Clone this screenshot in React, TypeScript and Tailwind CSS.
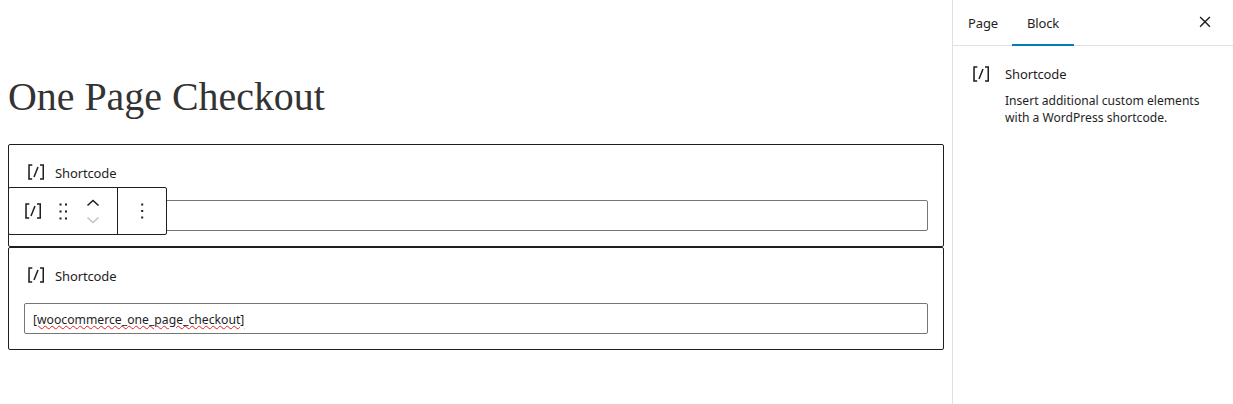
const uiFont = "font-['Noto_Sans','Open_Sans',sans-serif]";

function ShortcodeIcon({ className = "" }: { className?: string }) {
  return (
    <svg width="24" height="24" viewBox="0 0 24 24" className={className} fill="currentColor">
      <path d="M16 4.2v1.5h2.5v12.5H16v1.5h4V4.2h-4zM4.2 19.8h4v-1.5H5.8V5.8h2.5V4.2h-4l-.1 15.6zm5.1-3.1l1.4.6 4-10-1.4-.6-4 10z" />
    </svg>
  );
}

function BlockCard({ value, className = "" }: { value?: string; className?: string }) {
  return (
    <div className={`border border-[#1e1e1e] rounded-[2px] px-[15px] pt-[15px] pb-[15px] ${className}`}>
      <div className="flex items-center h-[24px] mb-[16px] text-[#1e1e1e]">
        <ShortcodeIcon />
        <span className="ml-[7px] pt-[2px] text-[13px] tracking-[-0.01em] leading-[24px] text-[#1e1e1e]">Shortcode</span>
      </div>
      <div className="h-[31px] border border-[#757575] rounded-[2px] px-[8px] pt-[3px] flex items-center text-[12.2px] text-[#1e1e1e]">
        {value && (
          <span className="underline decoration-wavy decoration-[#e02020] decoration-1 underline-offset-[1px]">{value}</span>
        )}
      </div>
    </div>
  );
}

function BlockToolbar() {
  return (
    <div className="absolute left-[8px] top-[187px] w-[159px] h-[48px] bg-white border border-[#1e1e1e] rounded-[2px] flex text-[#1e1e1e]">
      <div className="w-[109px] flex items-center border-r border-[#1e1e1e]">
        <ShortcodeIcon className="ml-[12px] shrink-0" />
        <svg width="18" height="18" viewBox="0 0 18 18" className="ml-[9px] shrink-0" fill="currentColor">
          <rect x="5.5" y="1.5" width="2" height="2" />
          <rect x="11" y="1.5" width="2" height="2" />
          <rect x="5.5" y="8.5" width="2" height="2" />
          <rect x="11" y="8.5" width="2" height="2" />
          <rect x="5.5" y="15.5" width="2" height="2" />
          <rect x="11" y="15.5" width="2" height="2" />
        </svg>
        <div className="ml-[13px] flex flex-col items-center">
          <svg width="16" height="12" viewBox="0 0 16 12" fill="none" stroke="#1e1e1e" strokeWidth="1.6">
            <path d="M2.5 8.5 8 3.5l5.5 5" />
          </svg>
          <svg width="16" height="12" viewBox="0 0 16 12" fill="none" stroke="#c4c4c4" strokeWidth="1.6" className="mt-[5px]">
            <path d="M2.5 3.5 8 8.5l5.5-5" />
          </svg>
        </div>
      </div>
      <div className="flex-1 flex items-center justify-center">
        <svg width="24" height="24" viewBox="0 0 24 24" fill="currentColor">
          <rect x="11.2" y="4.5" width="2" height="2" />
          <rect x="11.2" y="11" width="2" height="2" />
          <rect x="11.2" y="17.5" width="2" height="2" />
        </svg>
      </div>
    </div>
  );
}

export default function App() {
  return (
    <div className={`relative flex w-[1233px] h-[404px] overflow-hidden bg-white ${uiFont}`}>
      <main className="w-[952px] shrink-0 px-[8px]">
        <h1 className="font-['Liberation_Serif','Times_New_Roman',serif] text-[39.9px] leading-[50px] font-normal text-[#333333] mt-[72px] mb-[22px]">
          One Page Checkout
        </h1>
        <BlockCard />
        <BlockCard value="[woocommerce_one_page_checkout]" />
      </main>
      <BlockToolbar />
      <aside className="w-[281px] border-l border-[#e0e0e0]">
        <div className="h-[46px] border-b border-[#e0e0e0] flex items-center text-[13px] tracking-[-0.01em] text-[#1e1e1e]">
          <div className="w-[59px] h-full flex items-center pl-[15px] pt-[2px]">Page</div>
          <div className="w-[62px] h-[46px] flex items-center justify-center border-b-[2px] border-[#007cba] pt-[4px]">
            Block
          </div>
          <svg width="24" height="24" viewBox="0 0 24 24" fill="currentColor" className="ml-auto mr-[16px] -mt-[2px]">
            <path d="M13 11.8l4.4-4.4-1-1-4.4 4.4-4.4-4.4-1 1 4.4 4.4-4.4 4.4 1 1 4.4-4.4 4.4 4.4 1-1-4.4-4.4z" />
          </svg>
        </div>
        <div className="flex pl-[16px] pt-[16px]">
          <ShortcodeIcon className="shrink-0 text-[#1e1e1e]" />
          <div className="ml-[12px] w-[210px]">
            <div className="text-[13px] tracking-[-0.01em] leading-[24px] text-[#1e1e1e]">Shortcode</div>
            <p className="text-[12.1px] leading-[17px] text-[#1e1e1e] mt-[6px]">
              Insert additional custom elements with a WordPress shortcode.
            </p>
          </div>
        </div>
      </aside>
    </div>
  );
}
